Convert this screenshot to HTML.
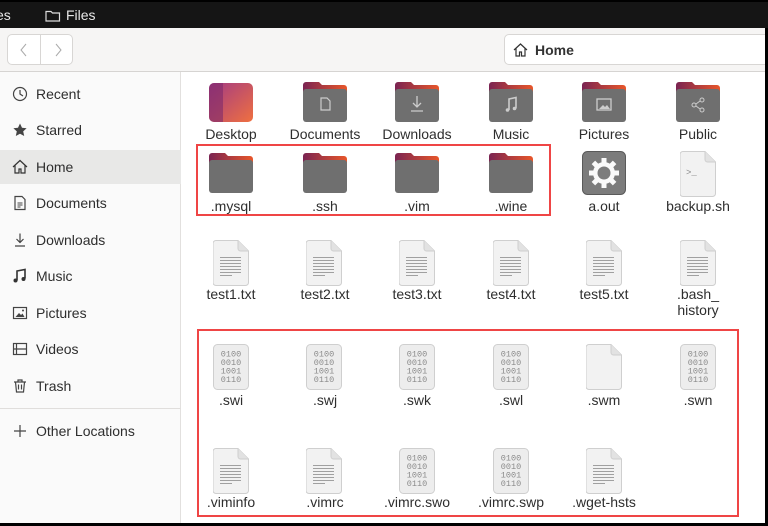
<!DOCTYPE html>
<html><head><meta charset="utf-8"><style>
*{margin:0;padding:0;box-sizing:border-box}
body{width:768px;height:526px;overflow:hidden;background:#000;font-family:"Liberation Sans","DejaVu Sans",sans-serif;position:relative}
#top{position:absolute;left:0;top:2px;width:768px;height:26px;background:#151515;color:#e8e8e8;font-size:14px}
#win{position:absolute;left:0;top:28px;width:765px;height:495px;background:#fff;overflow:hidden}
#hdr{position:absolute;left:0;top:0;width:765px;height:44px;background:#f6f5f4;border-bottom:1px solid #d6d4d2}
#side{position:absolute;left:0;top:44px;width:181px;height:451px;background:#fafafa;border-right:1px solid #e2e0de}
.si{position:absolute;left:0;width:181px;height:34px;font-size:14px;color:#2e2e2e;line-height:34px;padding-left:36px}
.si svg{position:absolute;left:12px;top:9px}
.it{position:absolute;width:110px;text-align:center;font-size:14px;color:#2e2e2e;line-height:16px}
.ic{position:absolute}
.box{position:absolute;border:2px solid #ef4545}
</style></head><body>
<svg width="0" height="0" style="position:absolute">
<defs>
<linearGradient id="tab" x1="0" x2="1"><stop offset="0" stop-color="#7a2452"/><stop offset="1" stop-color="#e8562a"/></linearGradient>
<linearGradient id="dk" x1="0" x2="1" y1="0" y2="1"><stop offset="0" stop-color="#a23a84"/><stop offset="1" stop-color="#ef7040"/></linearGradient>
<symbol id="fold" viewBox="0 0 44 40"><path d="M3 0h13l3 3h22a3 3 0 0 1 3 3v10H0V3a3 3 0 0 1 3-3z" fill="url(#tab)"/><rect x="0" y="7" width="44" height="33" rx="3" fill="#6f6f6f"/></symbol>
<symbol id="doc" viewBox="0 0 36 46"><path d="M3 .5h22l10.5 10.5v31.5a3 3 0 0 1-3 3h-29.5a3 3 0 0 1-3-3v-39a3 3 0 0 1 3-3z" fill="#f2f2f2" stroke="#cfcfcf"/><path d="M25 .5v8a2.5 2.5 0 0 0 2.5 2.5h8" fill="#e2e2e2" stroke="#cfcfcf"/></symbol>
<symbol id="txt" viewBox="0 0 36 46"><use href="#doc"/><g stroke="#a0a0a0" stroke-width="1"><path d="M7 17.5h21M7 20.5h21M7 23.5h21M7 26.5h21M7 29.5h21M7 32.5h21M7 35.5h12"/></g></symbol>
<symbol id="bin" viewBox="0 0 36 46"><rect x=".5" y=".5" width="35" height="45" rx="4" fill="#ededed" stroke="#cfcfcf"/><g font-size="8.5" font-family="Liberation Mono,monospace" fill="#8a8a8a" text-anchor="middle"><text x="18" y="12.5">0100</text><text x="18" y="21">0010</text><text x="18" y="29.5">1001</text><text x="18" y="38">0110</text></g></symbol>
</defs></svg>

<div id="top"><span style="position:absolute;left:-4px;top:5px">es</span>
<svg style="position:absolute;left:45px;top:7px" width="16" height="13"><path d="M1 2.5h5l1.5 1.5h7v8h-13.5z" fill="none" stroke="#ddd" stroke-width="1.2"/></svg>
<span style="position:absolute;left:66px;top:5px">Files</span></div>

<div id="win">
<div id="hdr">
<div style="position:absolute;left:7px;top:6px;width:66px;height:31px;background:#fff;border:1px solid #d8d6d4;border-radius:5px"><div style="position:absolute;left:32px;top:0;width:1px;height:29px;background:#d8d6d4"></div>
<svg style="position:absolute;left:12px;top:8px" width="8" height="14"><path d="M6 1L1 7l5 6" fill="none" stroke="#aaa" stroke-width="1"/></svg>
<svg style="position:absolute;left:46px;top:8px" width="8" height="14"><path d="M2 1l5 6-5 6" fill="none" stroke="#aaa" stroke-width="1"/></svg></div>
<div style="position:absolute;left:504px;top:6px;width:270px;height:31px;background:#fff;border:1px solid #d8d6d4;border-radius:5px">
<svg style="position:absolute;left:8px;top:8px" width="15" height="14"><path d="M1 7L7.5 1 14 7M3 5.5V13h3.5V9h2v4H12V5.5" fill="none" stroke="#333" stroke-width="1.2"/></svg>
<span style="position:absolute;left:30px;top:7px;font-size:14px;font-weight:bold;color:#333">Home</span></div>
</div>

<div id="side">
<div class="si" style="top:5px"><svg width="16" height="16"><circle cx="8" cy="8" r="6.5" fill="none" stroke="#444" stroke-width="1.2"/><path d="M8 4v4l3 2" fill="none" stroke="#444" stroke-width="1.2"/></svg>Recent</div>
<div class="si" style="top:41px"><svg width="16" height="16"><path d="M8 1.5l2 4.3 4.6.5-3.4 3.1 1 4.6L8 11.7 3.8 14l1-4.6L1.4 6.3 6 5.8z" fill="#444"/></svg>Starred</div>
<div class="si" style="top:78px;background:#e8e8e7"><svg width="16" height="16"><path d="M1 8L8 1.5 15 8M3 6.5V14h4v-4h2v4h4V6.5" fill="none" stroke="#333" stroke-width="1.2"/></svg>Home</div>
<div class="si" style="top:114px"><svg width="16" height="16"><path d="M3 1.5h7l3 3V14.5H3z" fill="none" stroke="#444" stroke-width="1.2"/><path d="M5.5 8h5M5.5 10h5M5.5 12h3" stroke="#444"/></svg>Documents</div>
<div class="si" style="top:151px"><svg width="16" height="16"><path d="M8 1.5v9M4.5 7l3.5 3.5L11.5 7M3 14h10" fill="none" stroke="#444" stroke-width="1.2"/></svg>Downloads</div>
<div class="si" style="top:187px"><svg width="16" height="16"><path d="M5 12.5V3l8-1.5v9" fill="none" stroke="#333" stroke-width="1.6"/><circle cx="3.5" cy="12.5" r="2" fill="#333"/><circle cx="11.5" cy="11" r="2" fill="#333"/></svg>Music</div>
<div class="si" style="top:224px"><svg width="16" height="16"><rect x="1.5" y="2.5" width="13" height="11" fill="none" stroke="#444" stroke-width="1.2"/><path d="M3.5 12l3.5-4 2 2 1.5-1.5 2 3.5z" fill="#444"/><circle cx="11" cy="5.5" r="1" fill="#444"/></svg>Pictures</div>
<div class="si" style="top:260px"><svg width="16" height="16"><rect x="1.5" y="2.5" width="13" height="11" fill="none" stroke="#444" stroke-width="1.2"/><path d="M4.5 2.5v11M1.5 8h13" stroke="#444" stroke-width="1.2"/></svg>Videos</div>
<div class="si" style="top:297px"><svg width="16" height="16"><path d="M2 4h12M6 4V2h4v2M3.5 4l1 10h7l1-10M6.5 6.5v5M9.5 6.5v5" fill="none" stroke="#444" stroke-width="1.2"/></svg>Trash</div>
<div style="position:absolute;left:0;top:336px;width:181px;height:1px;background:#e0dedc"></div>
<div class="si" style="top:342px"><svg width="16" height="16"><path d="M8 2v12M2 8h12" stroke="#444" stroke-width="1.2"/></svg>Other Locations</div>
</div>
</div>

<div style="position:absolute;left:0;top:0">
<svg class="ic" style="left:209px;top:83px" width="44" height="40"><rect width="44" height="39" rx="5" fill="url(#dk)"/><path d="M5 0h9v39H5a5 5 0 0 1-5-5V5a5 5 0 0 1 5-5z" fill="#7d2a6a" opacity=".6"/></svg>
<svg class="ic" style="left:303px;top:82px" width="44" height="40"><use href="#fold"/><path d="M18 16h6l3 3v9h-9z" fill="none" stroke="#ccc" stroke-width="1.2"/></svg>
<svg class="ic" style="left:395px;top:82px" width="44" height="40"><use href="#fold"/><path d="M22 14v11M18 21l4 4 4-4M16 29h12" fill="none" stroke="#ccc" stroke-width="1.3"/></svg>
<svg class="ic" style="left:489px;top:82px" width="44" height="40"><use href="#fold"/><path d="M20 28V17l7-1.5v11" fill="none" stroke="#ccc" stroke-width="1.6"/><circle cx="18.5" cy="28" r="1.8" fill="#ccc"/><circle cx="25.5" cy="26.5" r="1.8" fill="#ccc"/></svg>
<svg class="ic" style="left:582px;top:82px" width="44" height="40"><use href="#fold"/><rect x="15" y="17" width="14" height="11" fill="none" stroke="#ccc" stroke-width="1.3"/><path d="M17 27l4-4 2 2 2-2 3 4z" fill="#ccc"/></svg>
<svg class="ic" style="left:676px;top:82px" width="44" height="40"><use href="#fold"/><circle cx="18" cy="23" r="2" fill="none" stroke="#ccc"/><circle cx="26" cy="18" r="2" fill="none" stroke="#ccc"/><circle cx="26" cy="28" r="2" fill="none" stroke="#ccc"/><path d="M20 22l4-3M20 24l4 3" stroke="#ccc"/></svg>

<svg class="ic" style="left:209px;top:153px" width="44" height="40"><use href="#fold"/></svg>
<svg class="ic" style="left:303px;top:153px" width="44" height="40"><use href="#fold"/></svg>
<svg class="ic" style="left:395px;top:153px" width="44" height="40"><use href="#fold"/></svg>
<svg class="ic" style="left:489px;top:153px" width="44" height="40"><use href="#fold"/></svg>
<svg class="ic" style="left:582px;top:151px" width="44" height="44"><rect x=".5" y=".5" width="43" height="43" rx="5" fill="#7c7c7c" stroke="#5a5a5a"/><g fill="#fafafa"><circle cx="22" cy="22" r="11"/><g stroke="#fafafa" stroke-width="5"><path d="M22 7v30M7 22h30M11.4 11.4l21.2 21.2M32.6 11.4L11.4 32.6"/></g></g><circle cx="22" cy="22" r="6.5" fill="#7c7c7c"/></svg>
<svg class="ic" style="left:680px;top:151px" width="36" height="46"><use href="#doc"/><text x="6" y="24" font-size="9" font-family="Liberation Mono,monospace" fill="#888">&gt;_</text></svg>

<svg class="ic" style="left:213px;top:240px" width="36" height="46"><use href="#txt"/></svg>
<svg class="ic" style="left:306px;top:240px" width="36" height="46"><use href="#txt"/></svg>
<svg class="ic" style="left:399px;top:240px" width="36" height="46"><use href="#txt"/></svg>
<svg class="ic" style="left:493px;top:240px" width="36" height="46"><use href="#txt"/></svg>
<svg class="ic" style="left:586px;top:240px" width="36" height="46"><use href="#txt"/></svg>
<svg class="ic" style="left:680px;top:240px" width="36" height="46"><use href="#txt"/></svg>

<svg class="ic" style="left:213px;top:344px" width="36" height="46"><use href="#bin"/></svg>
<svg class="ic" style="left:306px;top:344px" width="36" height="46"><use href="#bin"/></svg>
<svg class="ic" style="left:399px;top:344px" width="36" height="46"><use href="#bin"/></svg>
<svg class="ic" style="left:493px;top:344px" width="36" height="46"><use href="#bin"/></svg>
<svg class="ic" style="left:586px;top:344px" width="36" height="46"><use href="#doc"/></svg>
<svg class="ic" style="left:680px;top:344px" width="36" height="46"><use href="#bin"/></svg>

<svg class="ic" style="left:213px;top:448px" width="36" height="46"><use href="#txt"/></svg>
<svg class="ic" style="left:306px;top:448px" width="36" height="46"><use href="#txt"/></svg>
<svg class="ic" style="left:399px;top:448px" width="36" height="46"><use href="#bin"/></svg>
<svg class="ic" style="left:493px;top:448px" width="36" height="46"><use href="#bin"/></svg>
<svg class="ic" style="left:586px;top:448px" width="36" height="46"><use href="#txt"/></svg>

<div class="it" style="left:176px;top:126px">Desktop</div>
<div class="it" style="left:270px;top:126px">Documents</div>
<div class="it" style="left:362px;top:126px">Downloads</div>
<div class="it" style="left:456px;top:126px">Music</div>
<div class="it" style="left:549px;top:126px">Pictures</div>
<div class="it" style="left:643px;top:126px">Public</div>

<div class="it" style="left:176px;top:198px">.mysql</div>
<div class="it" style="left:270px;top:198px">.ssh</div>
<div class="it" style="left:362px;top:198px">.vim</div>
<div class="it" style="left:456px;top:198px">.wine</div>
<div class="it" style="left:549px;top:198px">a.out</div>
<div class="it" style="left:643px;top:198px">backup.sh</div>

<div class="it" style="left:176px;top:286px">test1.txt</div>
<div class="it" style="left:270px;top:286px">test2.txt</div>
<div class="it" style="left:362px;top:286px">test3.txt</div>
<div class="it" style="left:456px;top:286px">test4.txt</div>
<div class="it" style="left:549px;top:286px">test5.txt</div>
<div class="it" style="left:643px;top:286px">.bash_<br>history</div>

<div class="it" style="left:176px;top:392px">.swi</div>
<div class="it" style="left:270px;top:392px">.swj</div>
<div class="it" style="left:362px;top:392px">.swk</div>
<div class="it" style="left:456px;top:392px">.swl</div>
<div class="it" style="left:549px;top:392px">.swm</div>
<div class="it" style="left:643px;top:392px">.swn</div>

<div class="it" style="left:176px;top:494px">.viminfo</div>
<div class="it" style="left:270px;top:494px">.vimrc</div>
<div class="it" style="left:362px;top:494px">.vimrc.swo</div>
<div class="it" style="left:456px;top:494px">.vimrc.swp</div>
<div class="it" style="left:549px;top:494px">.wget-hsts</div>

<div class="box" style="left:196px;top:144px;width:355px;height:72px"></div>
<div class="box" style="left:197px;top:329px;width:542px;height:188px"></div>
</div>
</body></html>
